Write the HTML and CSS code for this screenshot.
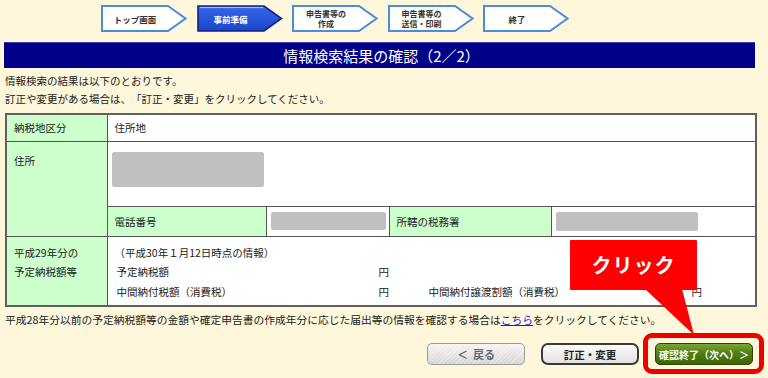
FILE: index.html
```html
<!DOCTYPE html>
<html lang="ja">
<head>
<meta charset="utf-8">
<title>情報検索結果の確認</title>
<link rel="stylesheet" href="styles.css">
</head>
<body>
<div class="page">
  <div class="steps">
    <div class="step">
      <svg class="step-shape" viewBox="0 0 86 27" width="86" height="27"><polygon points="1,1 67,1 84.5,13.5 67,26 1,26" fill="#fff" stroke="#4a8ed8" stroke-width="2"/></svg>
      <span class="step-label one">トップ画面</span>
    </div>
    <div class="step active">
      <svg class="step-shape" viewBox="0 0 86 27" width="86" height="27">
        <defs><linearGradient id="ag" x1="0" y1="0" x2="0" y2="1"><stop offset="0" stop-color="#4a7cf0"/><stop offset="0.15" stop-color="#2f62e6"/><stop offset="1" stop-color="#1c45c8"/></linearGradient></defs>
        <polygon points="1,1 67,1 84.5,13.5 67,26 1,26" fill="url(#ag)" stroke="#13237a" stroke-width="1.6"/>
        <line x1="3" y1="2.5" x2="66" y2="2.5" stroke="#9fc0ff" stroke-width="1"/>
      </svg>
      <span class="step-label one">事前準備</span>
    </div>
    <div class="step">
      <svg class="step-shape" viewBox="0 0 86 27" width="86" height="27"><polygon points="1,1 67,1 84.5,13.5 67,26 1,26" fill="#fff" stroke="#4a8ed8" stroke-width="2"/></svg>
      <span class="step-label two">申告書等の<br>作成</span>
    </div>
    <div class="step">
      <svg class="step-shape" viewBox="0 0 86 27" width="86" height="27"><polygon points="1,1 67,1 84.5,13.5 67,26 1,26" fill="#fff" stroke="#4a8ed8" stroke-width="2"/></svg>
      <span class="step-label two">申告書等の<br>送信・印刷</span>
    </div>
    <div class="step">
      <svg class="step-shape" viewBox="0 0 86 27" width="86" height="27"><polygon points="1,1 67,1 84.5,13.5 67,26 1,26" fill="#fff" stroke="#4a8ed8" stroke-width="2"/></svg>
      <span class="step-label one">終了</span>
    </div>
  </div>

  <div class="title-bar">情報検索結果の確認（2／2）</div>

  <div class="intro">
    <p>情報検索の結果は以下のとおりです。</p>
    <p>訂正や変更がある場合は、「訂正・変更」をクリックしてください。</p>
  </div>

  <table class="info">
    <colgroup>
      <col class="c1"><col class="c2"><col class="c3"><col class="c4"><col class="c5">
    </colgroup>
    <tr class="r1">
      <th class="mid">納税地区分</th>
      <td colspan="4" class="mid">住所地</td>
    </tr>
    <tr class="r2">
      <th rowspan="2" class="top">住所</th>
      <td colspan="4" class="addr"><div class="mask mask-addr"></div></td>
    </tr>
    <tr class="r2b">
      <th class="mid">電話番号</th>
      <td class="masked"><div class="mask mask-tel"></div></td>
      <th class="mid">所轄の税務署</th>
      <td class="masked"><div class="mask mask-office"></div></td>
    </tr>
    <tr class="r3">
      <th class="top">平成29年分の<br>予定納税額等</th>
      <td colspan="4" class="top tax">
        <div class="tax-note">（平成30年１月12日時点の情報）</div>
        <div class="tax-grid">
          <span class="lbl">予定納税額</span><span class="yen">円</span><span></span><span></span>
          <span class="lbl">中間納付税額（消費税）</span><span class="yen">円</span><span class="lbl2">中間納付譲渡割額（消費税）</span><span class="yen2">円</span>
        </div>
      </td>
    </tr>
  </table>

  <p class="note">平成28年分以前の予定納税額等の金額や確定申告書の作成年分に応じた届出等の情報を確認する場合は<a href="#" class="link">こちら</a>をクリックしてください。</p>

  <div class="buttons">
    <button class="btn btn-back">＜&nbsp;&nbsp;戻る</button>
    <button class="btn btn-edit">訂正・変更</button>
    <button class="btn btn-next">確認終了（次へ）＞</button>
  </div>
</div>

<div class="highlight"></div>
<div class="callout">クリック</div>
<svg class="callout-tail" width="60" height="50" viewBox="0 0 60 50"><polygon points="0,0 37,0 49,46" fill="#ff0000"/></svg>
</body>
</html>
```

FILE: styles.css
```css
html, body {
  margin: 0;
  padding: 0;
}
body {
  background: #fff7dc;
  font-family: "Noto Sans CJK JP", "Noto Sans", sans-serif;
  color: #222;
  width: 768px;
  height: 378px;
  overflow: hidden;
  position: relative;
  text-spacing-trim: space-all;
}
.page {
  padding: 0 13px 0 4px;
}
p { margin: 0; }

.steps {
  display: flex;
  gap: 9.5px;
  padding: 5px 0 0 97px;
  height: 27px;
}
.step {
  display: grid;
  width: 86px;
  height: 27px;
}
.step-shape, .step-label {
  grid-area: 1 / 1;
}
.step-label {
  width: 68px;
  display: flex;
  align-items: center;
  justify-content: center;
  text-align: center;
  font-weight: bold;
  color: #333;
}
.step-label.one { font-size: 8.5px; }
.step-label.two { font-size: 8px; line-height: 9.5px; }
.step.active .step-label { color: #fff; }

.title-bar {
  margin-top: 10px;
  height: 26px;
  background: #000088;
  border-top: 1px solid #3a3ab0;
  box-sizing: border-box;
  color: #fff;
  font-size: 15px;
  line-height: 25px;
  text-align: center;
  padding-left: 4px;
}

.intro {
  margin-top: 4px;
  padding-left: 1px;
  font-size: 10.5px;
  line-height: 18px;
}

.info {
  margin-top: 5px;
  margin-left: 1px;
  width: 750px;
  border-collapse: collapse;
  table-layout: fixed;
  border: 2px solid #606060;
  font-size: 10.5px;
}
.c1 { width: 101px; }
.c2 { width: 159px; }
.c3 { width: 123px; }
.c4 { width: 162px; }
.c5 { width: 205px; }
.info th, .info td {
  border: 1px solid #555;
  padding: 0 0 0 7px;
  text-align: left;
  font-weight: normal;
  line-height: 19px;
}
.info th { background: #ccffcc; }
.info td { background: #fff; }
.mid { vertical-align: middle; }
.top { vertical-align: top; }
.r1 { height: 27px; }
.r2 { height: 65px; }
.r2b { height: 30px; }
.r3 { height: 70px; }
.r2 th.top { padding-top: 9px; }
.r3 th.top { padding-top: 6px; }
.info td.addr {
  vertical-align: top;
  padding: 10px 0 0 4px;
}
.info td.masked {
  padding: 0 4px;
  vertical-align: middle;
}
.mask {
  background: #c0c0c0;
  border-radius: 2px;
}
.mask-addr { width: 152px; height: 35px; }
.mask-tel { width: 115px; height: 18px; }
.mask-office { width: 142px; height: 19px; }

.info td.tax {
  padding: 6px 0 0 7px;
}
.tax-grid {
  display: grid;
  grid-template-columns: 264px 50px 263px auto;
  row-gap: 1px;
}
.tax-grid .lbl { padding-left: 2px; }
.tax-grid .yen, .tax-grid .yen2 { line-height: 19px; }

.note {
  margin-top: 4px;
  padding-left: 1px;
  font-size: 10.75px;
  line-height: 18px;
}
.link { color: #1a1aee; text-decoration: underline; }

.buttons {
  display: flex;
  justify-content: flex-end;
  gap: 16px;
  margin-top: 14px;
  padding-right: 2px;
}
.btn {
  width: 98px;
  height: 22px;
  font-family: "Noto Sans CJK JP", "Noto Sans", sans-serif;
  font-weight: bold;
  font-size: 10.5px;
  padding: 0;
  box-sizing: border-box;
  cursor: pointer;
}
.btn-back {
  background: repeating-linear-gradient(135deg, rgba(255,255,255,0.35) 0 1px, rgba(0,0,0,0) 1px 3px), linear-gradient(#f5f5f5, #d4d4d4);
  border: 1px solid #9a9a9a;
  border-radius: 5px;
  color: #666;
  font-size: 11px;
}
.btn-edit {
  background: linear-gradient(#fbfbfb, #e2e2e2);
  border: 2px solid #3a3a3a;
  border-radius: 7px;
  color: #222;
}
.btn-next {
  background: linear-gradient(#79a532, #4e7c12 50%, #3c6405);
  border: 1px solid #2b4605;
  border-radius: 5px;
  color: #fff;
  font-size: 10px;
}

.highlight {
  position: absolute;
  left: 643px;
  top: 333px;
  width: 121px;
  height: 41px;
  box-sizing: border-box;
  border: 5px solid #ee0000;
  border-radius: 9px;
}
.callout {
  position: absolute;
  left: 570px;
  top: 240px;
  width: 127px;
  height: 50px;
  background: #ff0000;
  border-radius: 1px;
  color: #fff;
  font-weight: bold;
  font-size: 20px;
  line-height: 50px;
  text-align: center;
  letter-spacing: 1px;
}
.callout-tail {
  position: absolute;
  left: 645px;
  top: 289px;
}
```
